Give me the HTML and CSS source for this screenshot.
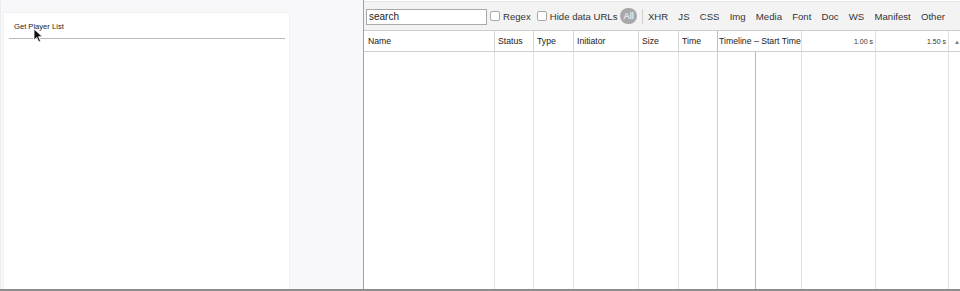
FILE: index.html
```html
<!DOCTYPE html>
<html>
<head>
<meta charset="utf-8">
<link rel="stylesheet" href="styles.css">
</head>
<body>
<div class="page">
  <div class="app">
    <div class="card">
      <div class="card-title">Get Player List</div>
      <div class="card-rule"></div>
    </div>
    <svg class="cursor" width="11" height="15" viewBox="0 0 11 15"><path d="M1 1 L1 12 L3.8 9.4 L5.8 14 L7.6 13.2 L5.6 8.7 L9.4 8.7 Z" fill="#111" stroke="#fff" stroke-width="0.8"/></svg>
  </div>
  <div class="divider"></div>
  <div class="devtools">
    <div class="toolbar">
      <div class="search">search</div>
      <label class="check"><span class="box"></span>Regex</label>
      <label class="check"><span class="box"></span>Hide data URLs</label>
      <span class="pill">All</span>
      <span class="sep"></span>
      <span class="filter">XHR</span>
      <span class="filter">JS</span>
      <span class="filter">CSS</span>
      <span class="filter">Img</span>
      <span class="filter">Media</span>
      <span class="filter">Font</span>
      <span class="filter">Doc</span>
      <span class="filter">WS</span>
      <span class="filter">Manifest</span>
      <span class="filter">Other</span>
    </div>
    <div class="table">
      <div class="hcell first">Name</div>
      <div class="hcell">Status</div>
      <div class="hcell">Type</div>
      <div class="hcell">Initiator</div>
      <div class="hcell">Size</div>
      <div class="hcell">Time</div>
      <div class="hcell timeline-h">
        <div class="tl-seg s1"><span class="tl-title">Timeline – Start Time</span></div>
        <div class="tl-seg s2"><span class="tl-label">1.00 s</span></div>
        <div class="tl-seg s3"><span class="tl-label">1.50 s</span></div>
        <div class="tl-seg s4"><span class="tri">▲</span></div>
      </div>
      <div class="bcell first"></div>
      <div class="bcell"></div>
      <div class="bcell"></div>
      <div class="bcell"></div>
      <div class="bcell"></div>
      <div class="bcell"></div>
      <div class="bcell timeline-b">
        <div class="tl-seg s1"></div>
        <div class="tl-seg s2"></div>
        <div class="tl-seg s3"></div>
        <div class="tl-seg s4"></div>
        <div class="marker"></div>
      </div>
    </div>
  </div>
</div>
</body>
</html>
```
FILE: styles.css
```css
* { box-sizing: border-box; }
html, body { margin: 0; padding: 0; background: #fff; }
body {
  font-family: "Liberation Sans", Arial, sans-serif;
  color: #222;
}
.page {
  display: flex;
  height: 291px;
  width: 960px;
  border-bottom: 2px solid #8d8d8d;
  overflow: hidden;
}
.app {
  position: relative;
  width: 363px;
  flex: none;
  background: #f8f8fa;
  padding: 13px 74px 0 3px;
  border-left: 1px solid #ececee;
}
.card {
  height: 100%;
  background: #fff;
  box-shadow: 0 0 2px rgba(0,0,0,0.08);
  padding: 9px 4px 0 5px;
}
.card-title {
  font-size: 7.6px;
  color: #222;
  padding-left: 5px;
  line-height: 10px;
}
.card-rule {
  margin-top: 6px;
  height: 1px;
  background: #b9b9b9;
}
.cursor {
  position: absolute;
  left: 32px;
  top: 28px;
}
.divider {
  width: 1px;
  flex: none;
  background: #a3a3a3;
}
.devtools {
  flex: 1;
  display: flex;
  flex-direction: column;
  min-width: 0;
}
.toolbar {
  height: 30px;
  flex: none;
  background: #f3f3f3;
  border-top: 1px solid #e4e4e4;
  margin-top: 1px;
  border-bottom: 1px solid #cdcdcd;
  display: flex;
  align-items: center;
  padding-left: 2px;
  font-size: 9.6px;
  color: #333;
  white-space: nowrap;
}
.search {
  width: 121px;
  height: 16px;
  background: #fff;
  border: 1px solid #a9a9a9;
  font-size: 10px;
  line-height: 14px;
  padding-left: 2px;
  color: #222;
  margin-top: 1px;
}
.check {
  display: flex;
  align-items: center;
  margin-left: 3px;
}
.check + .check { margin-left: 6px; }
.box {
  width: 10px;
  height: 10px;
  border: 1px solid #a9a9a9;
  border-radius: 2px;
  background: #fff;
  margin-right: 3px;
}
.pill {
  margin-left: 3px;
  background: #a8a8a8;
  color: #fff;
  border-radius: 8px;
  padding: 0 3px;
  height: 16px;
  line-height: 16px;
  font-size: 9.4px;
}
.sep {
  width: 1px;
  height: 15px;
  background: #cfcfcf;
  margin: 0 5px 0 5px;
}
.filter {
  margin: 0 10.2px 0 0;
}
.table {
  flex: 1;
  display: grid;
  grid-template-columns: 130px 39px 40px 65px 40px 39px 1fr;
  grid-template-rows: 21px 1fr;
}
.hcell {
  border-left: 1px solid #d6d6d6;
  border-bottom: 1px solid #cfcfcf;
  font-size: 8.7px;
  line-height: 20px;
  padding-left: 3px;
  color: #222;
  background: #fff;
  white-space: nowrap;
}
.bcell {
  border-left: 1px solid #e3e3e3;
  background: #fff;
}
.first { border-left: none; padding-left: 4px; }
.timeline-h, .timeline-b {
  display: flex;
  padding-left: 0;
  position: relative;
}
.timeline-h { border-left-color: #bdbdbd; }
.timeline-b { border-left-color: #d0d0d0; }
.tl-seg {
  border-right: 1px solid #e0e0e0;
  flex: none;
  position: relative;
}
.s1 { width: 84px; }
.s2 { width: 74px; }
.s3 { width: 73px; }
.s4 { flex: 1; border-right: none; }
.tl-title {
  padding-left: 1px;
  font-size: 8.7px;
}
.tl-label {
  position: absolute;
  right: 2px;
  top: 4px;
  font-size: 7px;
  line-height: 14px;
  color: #333;
}
.tri {
  font-size: 6px;
  color: #777;
  padding-left: 5px;
  line-height: 16px;
}
.marker {
  position: absolute;
  left: 37px;
  top: 0;
  bottom: 0;
  width: 1px;
  background: #f2a29c;
  z-index: 1;
}
```
